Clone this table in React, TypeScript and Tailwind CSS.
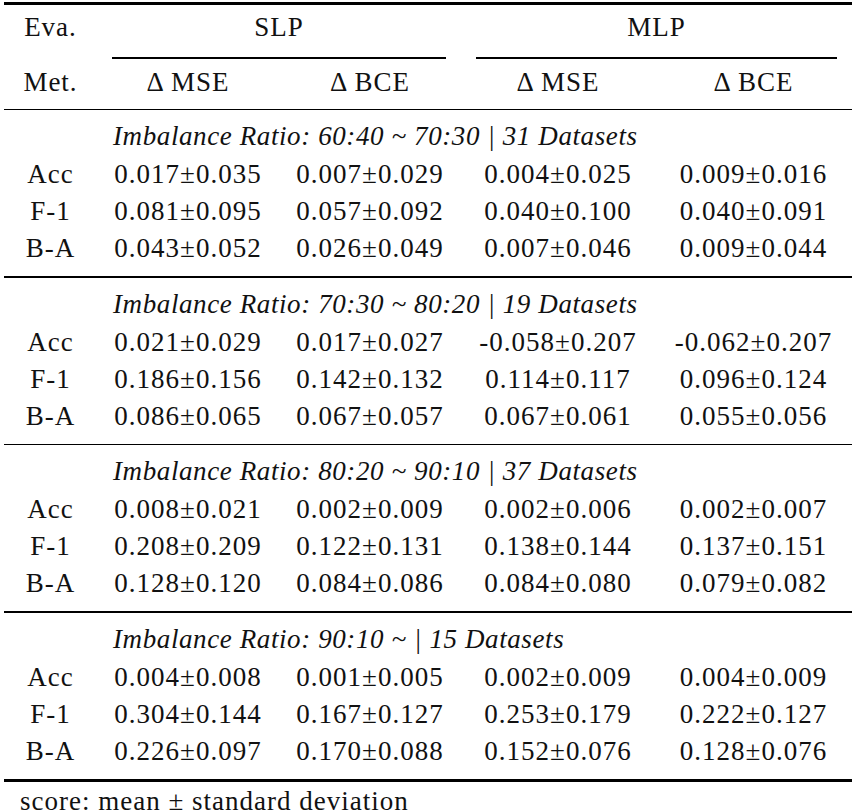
import React from 'react';

type Section = {
  title: string;
  rows: { label: string; values: string[] }[];
};

const sections: Section[] = [
  {
    title: 'Imbalance Ratio: 60:40 ~ 70:30 | 31 Datasets',
    rows: [
      { label: 'Acc', values: ['0.017±0.035', '0.007±0.029', '0.004±0.025', '0.009±0.016'] },
      { label: 'F-1', values: ['0.081±0.095', '0.057±0.092', '0.040±0.100', '0.040±0.091'] },
      { label: 'B-A', values: ['0.043±0.052', '0.026±0.049', '0.007±0.046', '0.009±0.044'] },
    ],
  },
  {
    title: 'Imbalance Ratio: 70:30 ~ 80:20 | 19 Datasets',
    rows: [
      { label: 'Acc', values: ['0.021±0.029', '0.017±0.027', '-0.058±0.207', '-0.062±0.207'] },
      { label: 'F-1', values: ['0.186±0.156', '0.142±0.132', '0.114±0.117', '0.096±0.124'] },
      { label: 'B-A', values: ['0.086±0.065', '0.067±0.057', '0.067±0.061', '0.055±0.056'] },
    ],
  },
  {
    title: 'Imbalance Ratio: 80:20 ~ 90:10 | 37 Datasets',
    rows: [
      { label: 'Acc', values: ['0.008±0.021', '0.002±0.009', '0.002±0.006', '0.002±0.007'] },
      { label: 'F-1', values: ['0.208±0.209', '0.122±0.131', '0.138±0.144', '0.137±0.151'] },
      { label: 'B-A', values: ['0.128±0.120', '0.084±0.086', '0.084±0.080', '0.079±0.082'] },
    ],
  },
  {
    title: 'Imbalance Ratio: 90:10 ~ | 15 Datasets',
    rows: [
      { label: 'Acc', values: ['0.004±0.008', '0.001±0.005', '0.002±0.009', '0.004±0.009'] },
      { label: 'F-1', values: ['0.304±0.144', '0.167±0.127', '0.253±0.179', '0.222±0.127'] },
      { label: 'B-A', values: ['0.226±0.097', '0.170±0.088', '0.152±0.076', '0.128±0.076'] },
    ],
  },
];

// booktabs-ish column widths (label | SLP x2 | MLP x2)
const cols = 'grid grid-cols-[93px_182px_182px_194px_197px]';

const App: React.FC = () => {
  return (
    <div className="w-[856px] h-[812px] overflow-hidden bg-white text-[#111] font-['Liberation_Serif',serif] text-[27px] leading-none tracking-[1px]">
      <div className="ml-[4px] w-[848px] pt-[2px]">
        {/* toprule */}
        <div className="h-[3px] bg-black" />

        <div className={`${cols} h-[52px] pb-[7px] items-center text-center`}>
          <div>Eva.</div>
          <div className="col-span-2">SLP</div>
          <div className="col-span-2">MLP</div>
        </div>

        {/* cmidrules */}
        <div className={cols}>
          <div />
          <div className="col-span-2 mx-[15px] h-[1.5px] bg-black" />
          <div className="col-span-2 mr-[15px] ml-[15px] h-[1.5px] bg-black" />
        </div>

        <div className={`${cols} h-[50px] pb-[3px] items-center text-center`}>
          <div>Met.</div>
          <div>Δ MSE</div>
          <div>Δ BCE</div>
          <div>Δ MSE</div>
          <div>Δ BCE</div>
        </div>

        {sections.map((s, i) => (
          <div key={i}>
            <div className="h-[1.5px] bg-black" />
            <div className="pt-[8px] pb-[10px]">
              <div className={`${cols} h-[37px] items-center`}>
                <div className="col-start-2 col-span-4 pl-[16px] italic tracking-[0.6px]">
                  {s.title}
                </div>
              </div>
              {s.rows.map((r) => (
                <div key={r.label} className={`${cols} h-[37px] pt-[2px] items-center text-center`}>
                  <div>{r.label}</div>
                  {r.values.map((v, j) => (
                    <div key={j}>{v}</div>
                  ))}
                </div>
              ))}
            </div>
          </div>
        ))}

        {/* bottomrule */}
        <div className="h-[3px] bg-black" />
        <div className="pl-[16px] pt-[6px] whitespace-nowrap">score: mean ± standard deviation</div>
      </div>
    </div>
  );
};

export default App;
